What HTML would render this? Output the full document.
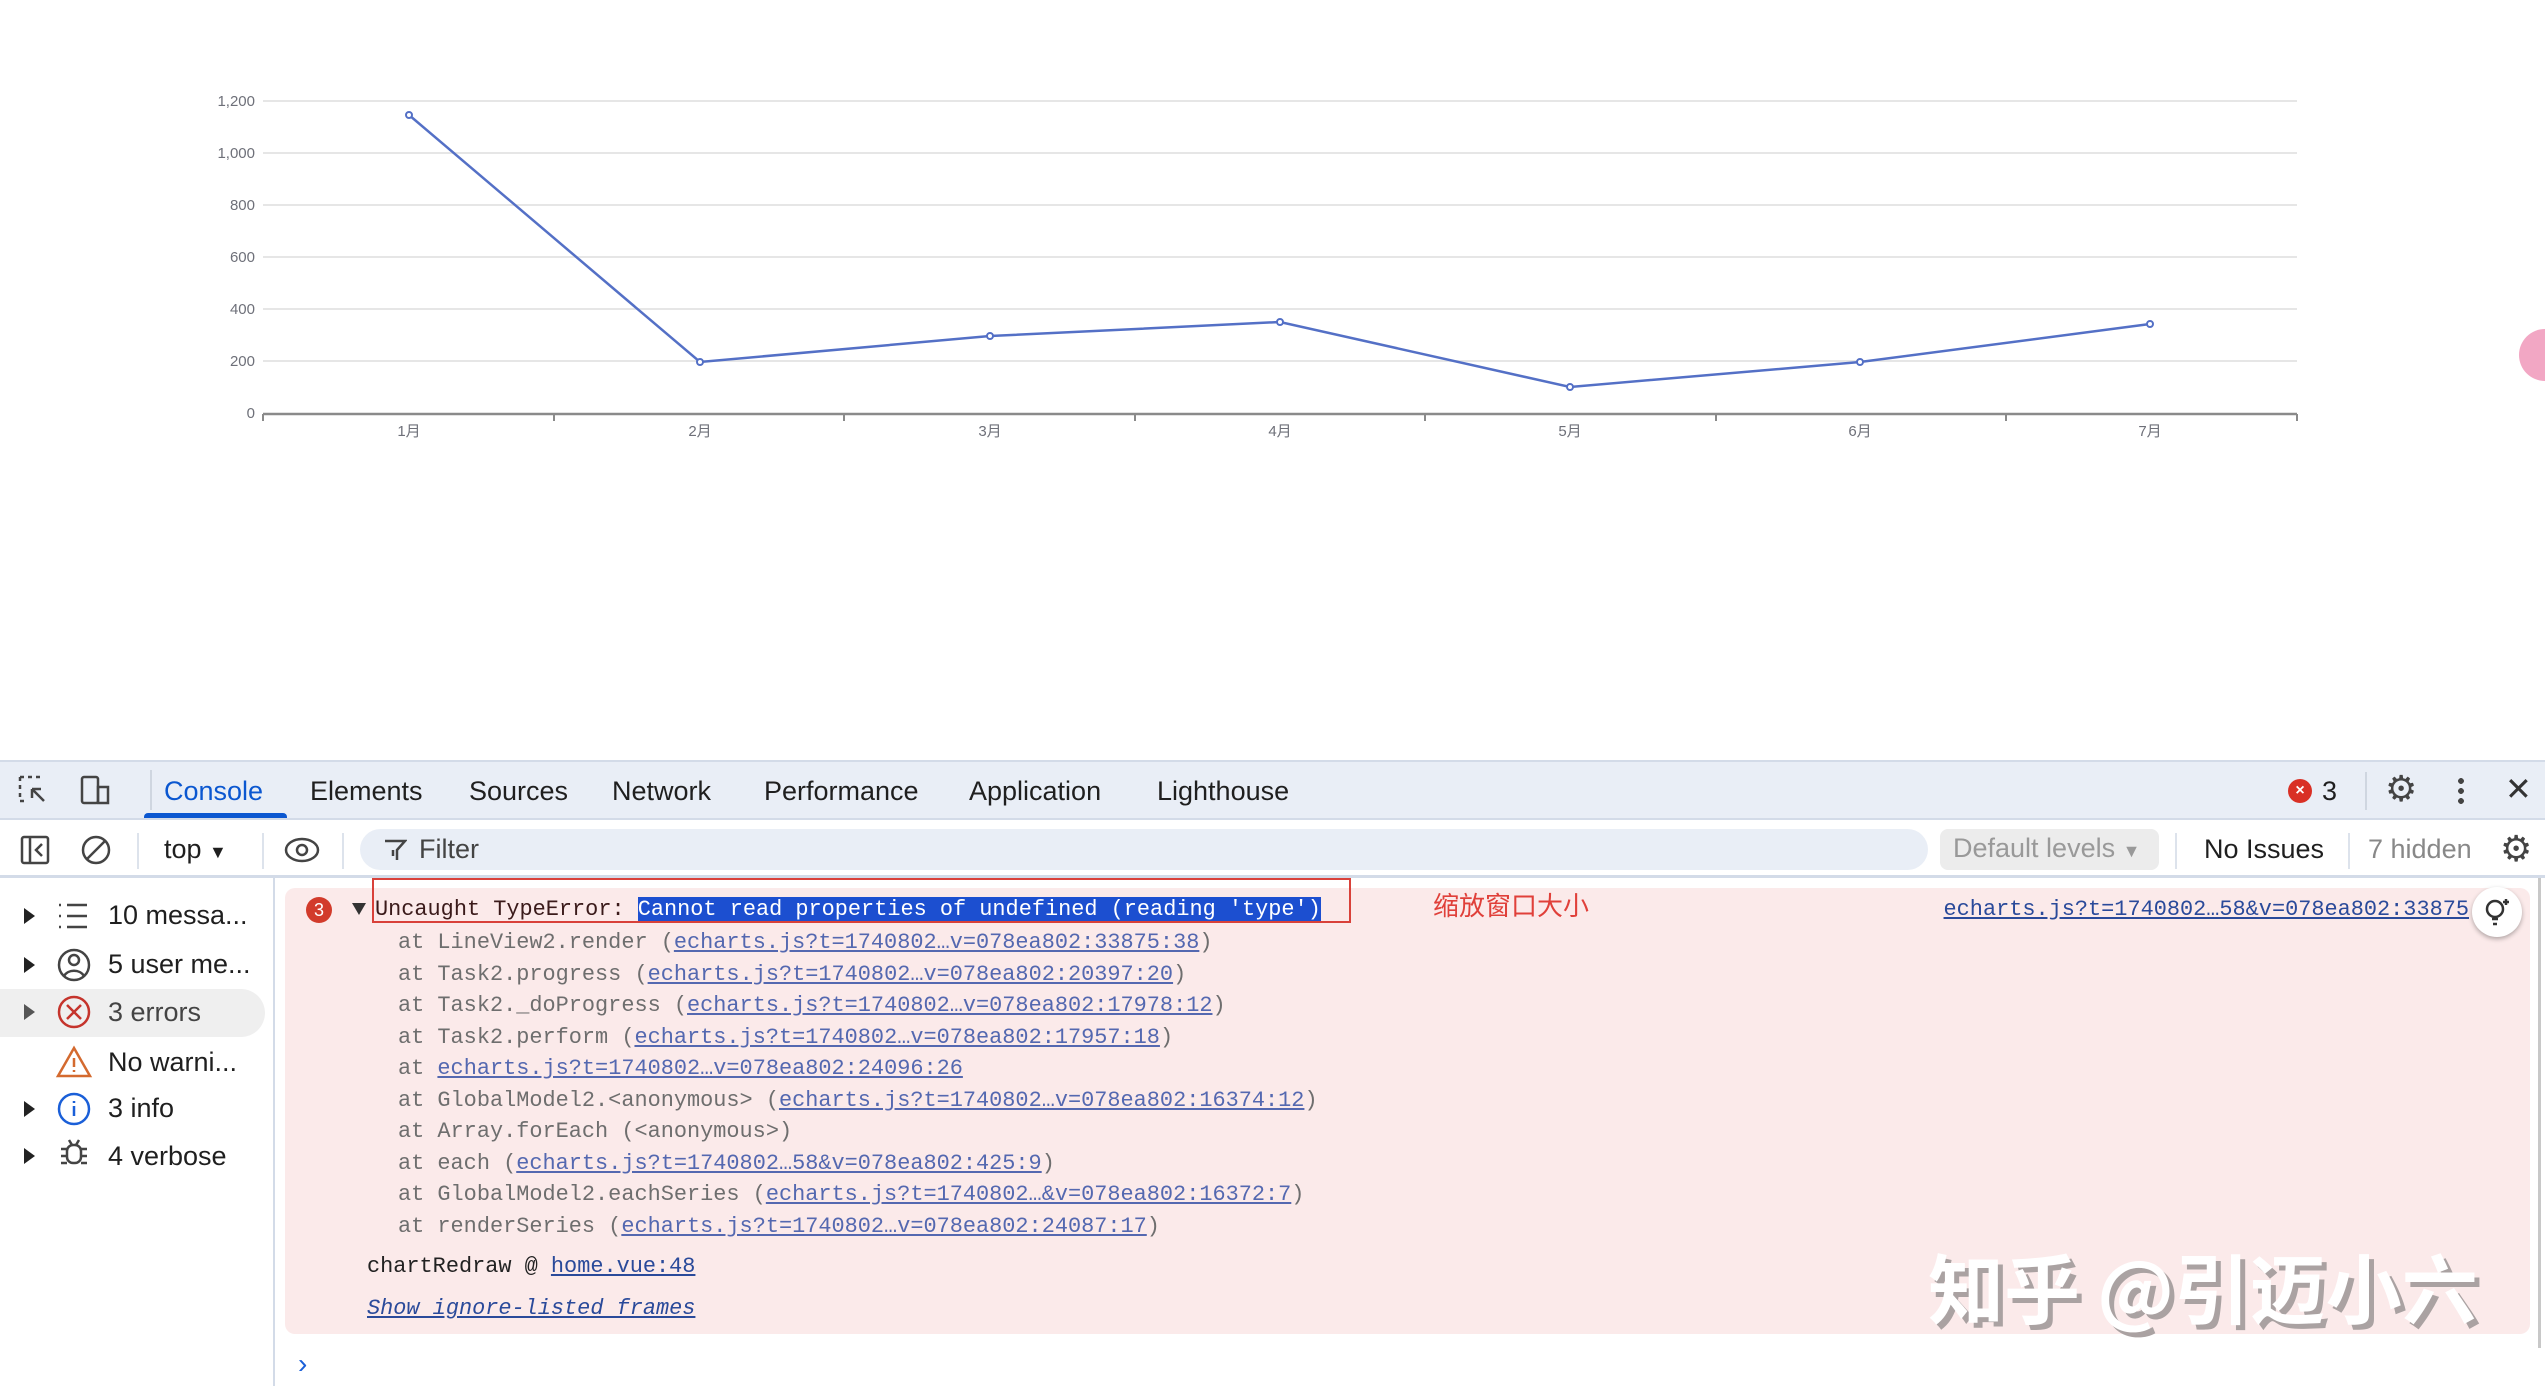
<!DOCTYPE html>
<html><head><meta charset="utf-8"><style>
*{margin:0;padding:0;box-sizing:border-box}
body{width:2545px;height:1386px;background:#fff;position:relative;overflow:hidden;font-family:"Liberation Sans","Noto Sans CJK SC",sans-serif}
.a{position:absolute;white-space:nowrap}
.tab{position:absolute;top:776px;font-size:27px;color:#1f1f1f}
.mono{font-family:"Liberation Mono","Noto Sans CJK SC",monospace;font-size:21.9px}
.st{position:absolute;left:398px;color:#6e6e6e}
.lk{color:#5468b0;text-decoration:underline}
.side{position:absolute;left:108px;font-size:27px;color:#1f1f1f}
.tri{position:absolute;left:24px;width:0;height:0;border-left:11px solid #222;border-top:8px solid transparent;border-bottom:8px solid transparent}
</style></head><body>
<svg class="a" style="left:0;top:0" width="2545" height="760">
<g stroke="#e6e6e6" stroke-width="2">
<line x1="263" y1="101" x2="2297" y2="101"/><line x1="263" y1="153" x2="2297" y2="153"/>
<line x1="263" y1="205" x2="2297" y2="205"/><line x1="263" y1="257" x2="2297" y2="257"/>
<line x1="263" y1="309" x2="2297" y2="309"/><line x1="263" y1="361" x2="2297" y2="361"/>
</g>
<line x1="263" y1="414" x2="2297" y2="414" stroke="#8a8a8a" stroke-width="2.5"/>
<g stroke="#8a8a8a" stroke-width="2"><line x1="263" y1="414" x2="263" y2="421"/><line x1="554" y1="414" x2="554" y2="421"/><line x1="844" y1="414" x2="844" y2="421"/><line x1="1135" y1="414" x2="1135" y2="421"/><line x1="1425" y1="414" x2="1425" y2="421"/><line x1="1716" y1="414" x2="1716" y2="421"/><line x1="2006" y1="414" x2="2006" y2="421"/><line x1="2297" y1="414" x2="2297" y2="421"/></g>
<g font-family="Liberation Sans,Noto Sans CJK SC,sans-serif" font-size="15" fill="#6e7079" text-anchor="end">
<text x="255" y="106">1,200</text><text x="255" y="158">1,000</text><text x="255" y="210">800</text><text x="255" y="262">600</text><text x="255" y="314">400</text><text x="255" y="366">200</text><text x="255" y="418">0</text></g>
<g font-family="Liberation Sans,Noto Sans CJK SC,sans-serif" font-size="15" fill="#6e7079" text-anchor="middle">
<text x="409" y="436">1月</text><text x="700" y="436">2月</text><text x="990" y="436">3月</text><text x="1280" y="436">4月</text><text x="1570" y="436">5月</text><text x="1860" y="436">6月</text><text x="2150" y="436">7月</text></g>
<polyline fill="none" stroke="#5470c6" stroke-width="2.5" points="409,115 700,362 990,336 1280,322 1570,387 1860,362 2150,324"/>
<g fill="#fff" stroke="#5470c6" stroke-width="2"><circle cx="409" cy="115" r="3"/><circle cx="700" cy="362" r="3"/><circle cx="990" cy="336" r="3"/><circle cx="1280" cy="322" r="3"/><circle cx="1570" cy="387" r="3"/><circle cx="1860" cy="362" r="3"/><circle cx="2150" cy="324" r="3"/></g>
<circle cx="2545" cy="355" r="26" fill="#f2a7c4"/>
</svg>
<div class="a" style="left:0;top:760px;width:2545px;height:60px;background:#e9eef6;border-top:2px solid #d3dbe8;border-bottom:2px solid #d3dbe8"></div>
<svg class="a" style="left:18px;top:775px" width="100" height="32" fill="none" stroke="#444" stroke-width="2.5">
<path d="M2 2h4M10 2h4M18 2h4M2 2v4M2 10v4M2 18v4M2 26h4M14 14l12 12M14 14v9M14 14h9"/>
<rect x="64" y="2" width="16" height="26" rx="2"/><rect x="80" y="12" width="10" height="16"/>
</svg>
<div class="a" style="left:150px;top:770px;width:2px;height:40px;background:#cfd6e0"></div>
<div class="tab" style="left:164px;color:#0b57d0">Console</div>
<div class="a" style="left:144px;top:813px;width:143px;height:5px;background:#0b57d0;border-radius:4px 4px 0 0"></div>
<div class="tab" style="left:310px">Elements</div>
<div class="tab" style="left:469px">Sources</div>
<div class="tab" style="left:612px">Network</div>
<div class="tab" style="left:764px">Performance</div>
<div class="tab" style="left:969px">Application</div>
<div class="tab" style="left:1157px">Lighthouse</div>
<div class="a" style="left:2288px;top:779px;width:24px;height:24px;border-radius:50%;background:#d93025;color:#fff;font-size:16px;text-align:center;line-height:24px;font-weight:bold">×</div>
<div class="tab" style="left:2322px">3</div>
<div class="a" style="left:2365px;top:772px;width:2px;height:38px;background:#cfd6e0"></div>
<div class="a" style="left:2385px;top:768px;font-size:36px;color:#444">⚙</div>
<div class="a" style="left:2458px;top:776px;width:6px;height:28px;background:radial-gradient(circle,#444 2.8px,transparent 3px) 0 0/6px 10px"></div>
<div class="a" style="left:2505px;top:770px;font-size:32px;color:#333">✕</div>
<div class="a" style="left:0;top:875px;width:2545px;height:3px;background:#d3dbe8"></div>
<svg class="a" style="left:20px;top:834px" width="300" height="34" fill="none" stroke="#444" stroke-width="2.5">
<rect x="2" y="3" width="26" height="26" rx="2"/><path d="M10 3v26M22 10l-6 6 6 6"/>
<circle cx="76" cy="16" r="13"/><path d="M67 25l18-18"/>
<ellipse cx="282" cy="16" rx="16" ry="11"/><circle cx="282" cy="16" r="5"/>
</svg>
<div class="a" style="left:137px;top:833px;width:2px;height:36px;background:#dde3ec"></div>
<div class="a" style="left:164px;top:834px;font-size:27px;color:#1f1f1f">top <span style="font-size:18px">▼</span></div>
<div class="a" style="left:262px;top:833px;width:2px;height:36px;background:#dde3ec"></div>
<div class="a" style="left:342px;top:833px;width:2px;height:36px;background:#dde3ec"></div>
<div class="a" style="left:360px;top:829px;width:1568px;height:41px;background:#e9eef6;border-radius:21px"></div>
<svg class="a" style="left:383px;top:838px" width="24" height="24" fill="none" stroke="#444" stroke-width="2.5"><path d="M2 3h20l-8 9v10M10 12v6"/></svg>
<div class="a" style="left:419px;top:834px;font-size:27px;color:#444">Filter</div>
<div class="a" style="left:1940px;top:829px;width:219px;height:41px;background:#ececec;border-radius:8px;color:#999;font-size:27px;padding:4px 13px">Default levels <span style="font-size:18px">▼</span></div>
<div class="a" style="left:2175px;top:833px;width:2px;height:36px;background:#dde3ec"></div>
<div class="a" style="left:2204px;top:834px;font-size:27px;color:#1f1f1f">No Issues</div>
<div class="a" style="left:2348px;top:833px;width:2px;height:36px;background:#dde3ec"></div>
<div class="a" style="left:2368px;top:834px;font-size:27px;color:#888">7 hidden</div>
<div class="a" style="left:2500px;top:828px;font-size:36px;color:#444">⚙</div>
<div class="a" style="left:273px;top:878px;width:2px;height:508px;background:#d3dbe8"></div>
<div class="a" style="left:0;top:989px;width:265px;height:48px;background:#efefef;border-radius:0 24px 24px 0"></div>
<div class="tri" style="top:908px"></div><div class="tri" style="top:957px"></div><div class="tri" style="top:1004px;border-left-color:#555"></div><div class="tri" style="top:1101px"></div><div class="tri" style="top:1148px"></div>
<svg class="a" style="left:55px;top:895px" width="40" height="280" fill="none" stroke-width="2.5">
<g stroke="#444"><path d="M12 10h20M12 21h20M12 32h20"/><path d="M4 10h2M4 21h2M4 32h2"/>
<circle cx="19" cy="70" r="15"/><circle cx="19" cy="65" r="5"/><path d="M9 81c4-7 16-7 20 0"/></g>
<g stroke="#c5342c"><circle cx="19" cy="117" r="15"/><path d="M12 110l14 14M26 110l-14 14"/></g>
<g stroke="#d46a2f"><path d="M19 153l16 28H3z"/><path d="M19 163v9M19 175v2"/></g>
<g stroke="#1a5fd8"><circle cx="19" cy="214" r="15"/><path d="M19 211v10M19 206v2"/></g>
<g stroke="#444"><rect x="12" y="250" width="14" height="18" rx="6"/><path d="M6 254h6M26 254h6M6 261h6M26 261h6M6 268h6M26 268h6M14 245l3 5M24 245l-3 5"/></g>
</svg>
<div class="side" style="top:900px">10 messa...</div>
<div class="side" style="top:949px">5 user me...</div>
<div class="side" style="top:997px;color:#444">3 errors</div>
<div class="side" style="top:1047px">No warni...</div>
<div class="side" style="top:1093px">3 info</div>
<div class="side" style="top:1141px">4 verbose</div>
<div class="a" style="left:285px;top:888px;width:2245px;height:446px;background:#fbeaea;border-radius:10px"></div>
<div class="a" style="left:2538px;top:878px;width:3px;height:470px;background:#c8c8c8"></div>
<div class="a" style="left:306px;top:897px;width:26px;height:26px;border-radius:50%;background:#d23b2b;color:#fff;font-size:18px;text-align:center;line-height:26px">3</div>
<div class="a" style="left:352px;top:903px;width:0;height:0;border-top:12px solid #333;border-left:7px solid transparent;border-right:7px solid transparent"></div>
<div class="a mono" style="left:375px;top:897px;color:#3a1a1a">Uncaught TypeError: <span style="background:#1c4fd0;color:#fff">Cannot read properties of undefined (reading 'type')</span></div>
<div class="a" style="left:372px;top:878px;width:979px;height:45px;border:2px solid #d9413a"></div>
<div class="a" style="left:1433px;top:886px;font-size:26px;color:#e0403a;font-family:'Noto Sans CJK SC',sans-serif">缩放窗口大小</div>
<div class="a mono lk" style="right:76px;top:897px;color:#2a4a9a">echarts.js?t=1740802…58&amp;v=078ea802:33875</div>
<div class="a" style="left:2472px;top:887px;width:50px;height:50px;border-radius:50%;background:#fff;box-shadow:0 2px 5px rgba(0,0,0,.3)"></div>
<svg class="a" style="left:2482px;top:897px" width="30" height="30" fill="none" stroke="#333" stroke-width="2.5"><circle cx="13" cy="12" r="8"/><path d="M10 22h6M11 27h4M24 2v6M21 5h6"/></svg>
<div class="st mono" style="top:930px">at LineView2.render (<span class="lk">echarts.js?t=1740802…v=078ea802:33875:38</span>)</div>
<div class="st mono" style="top:962px">at Task2.progress (<span class="lk">echarts.js?t=1740802…v=078ea802:20397:20</span>)</div>
<div class="st mono" style="top:993px">at Task2._doProgress (<span class="lk">echarts.js?t=1740802…v=078ea802:17978:12</span>)</div>
<div class="st mono" style="top:1025px">at Task2.perform (<span class="lk">echarts.js?t=1740802…v=078ea802:17957:18</span>)</div>
<div class="st mono" style="top:1056px">at <span class="lk">echarts.js?t=1740802…v=078ea802:24096:26</span></div>
<div class="st mono" style="top:1088px">at GlobalModel2.&lt;anonymous&gt; (<span class="lk">echarts.js?t=1740802…v=078ea802:16374:12</span>)</div>
<div class="st mono" style="top:1119px">at Array.forEach (&lt;anonymous&gt;)</div>
<div class="st mono" style="top:1151px">at each (<span class="lk">echarts.js?t=1740802…58&amp;v=078ea802:425:9</span>)</div>
<div class="st mono" style="top:1182px">at GlobalModel2.eachSeries (<span class="lk">echarts.js?t=1740802…&amp;v=078ea802:16372:7</span>)</div>
<div class="st mono" style="top:1214px">at renderSeries (<span class="lk">echarts.js?t=1740802…v=078ea802:24087:17</span>)</div>
<div class="a mono" style="left:367px;top:1254px;color:#222">chartRedraw @ <span class="lk" style="color:#2a4a9a">home.vue:48</span></div>
<div class="a mono lk" style="left:367px;top:1296px;font-style:italic;color:#2a4a9a">Show ignore-listed frames</div>
<div class="a" style="left:1928px;top:1230px;font-size:76px;color:#fff;text-shadow:5px 5px 0 #aaa2a2;font-family:'Noto Sans CJK SC',sans-serif;font-weight:bold">知乎 @引迈小六</div>
<div class="a" style="left:298px;top:1348px;font-size:28px;color:#1a5fd8">›</div>
</body></html>
